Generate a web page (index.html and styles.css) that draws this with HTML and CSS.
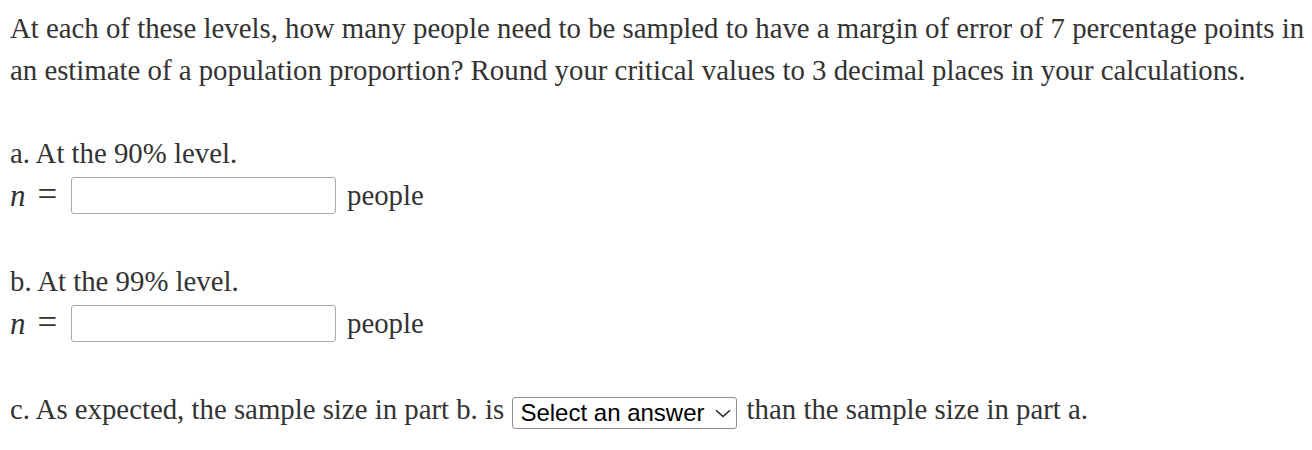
FILE: index.html
```html
<!DOCTYPE html>
<html>
<head>
<meta charset="utf-8">
<link rel="stylesheet" href="styles.css">
</head>
<body>
<div class="question">
  <p class="intro">At each of these levels, how many people need to be sampled to have a margin of error of 7 percentage points in an estimate of a population proportion? Round your critical values to 3 decimal places in your calculations.</p>

  <div class="part">
    <div class="label">a. At the 90% level.</div>
    <div class="answer-row">
      <span class="math"><span class="var">n</span><span class="eq">=</span></span>
      <input class="num-input" type="text">
      <span class="unit">people</span>
    </div>
  </div>

  <div class="part">
    <div class="label">b. At the 99% level.</div>
    <div class="answer-row">
      <span class="math"><span class="var">n</span><span class="eq">=</span></span>
      <input class="num-input" type="text">
      <span class="unit">people</span>
    </div>
  </div>

  <div class="part last">
    <div class="label">c. As expected, the sample size in part b. is
      <span class="select"><span class="select-text">Select an answer</span><svg class="chev" width="16" height="9" viewBox="0 0 16 9"><path d="M1 1.2 L8 7.5 L15 1.2" fill="none" stroke="#222" stroke-width="1.5"/></svg></span>
      than the sample size in part a.</div>
  </div>
</div>
</body>
</html>
```

FILE: styles.css
```css
html, body {
  margin: 0;
  padding: 0;
  background: #fff;
}
body {
  padding: 7px 0 7px 10px;
  font-family: "Liberation Serif", "Times New Roman", serif;
  font-size: 28.8px;
  color: #333;
}
.intro {
  margin: 0;
  line-height: 42px;
}
.part {
  margin-top: 41px;
}
.part + .part {
  margin-top: 44px;
}
.label {
  line-height: 42px;
  height: 42px;
}
.answer-row {
  display: flex;
  align-items: center;
  height: 42px;
}
.math {
  display: inline-flex;
  align-items: baseline;
  width: 61px;
}
.var {
  font-style: italic;
  font-size: 31px;
}
.eq {
  margin-left: 12px;
  font-size: 35px;
  line-height: 1;
}
.num-input {
  box-sizing: border-box;
  width: 265px;
  height: 37px;
  border: 1px solid #a8a8a8;
  border-radius: 3px;
  margin: 0;
  padding: 0 6px;
  font-size: 20px;
  background: #fff;
}
.unit {
  margin-left: 11px;
}
.select {
  display: inline-flex;
  align-items: center;
  box-sizing: border-box;
  width: 225px;
  height: 32px;
  border: 1px solid #8e8e8e;
  border-radius: 3px;
  padding: 0 5px 0 7px;
  vertical-align: -2px;
  font-family: "Liberation Sans", Arial, sans-serif;
  font-size: 24px;
  color: #000;
  justify-content: space-between;
  margin: 0 2px 0 1px;
  white-space: nowrap;
}
.chev {
  display: block;
  flex-shrink: 0;
  margin-top: 1px;
}
```
